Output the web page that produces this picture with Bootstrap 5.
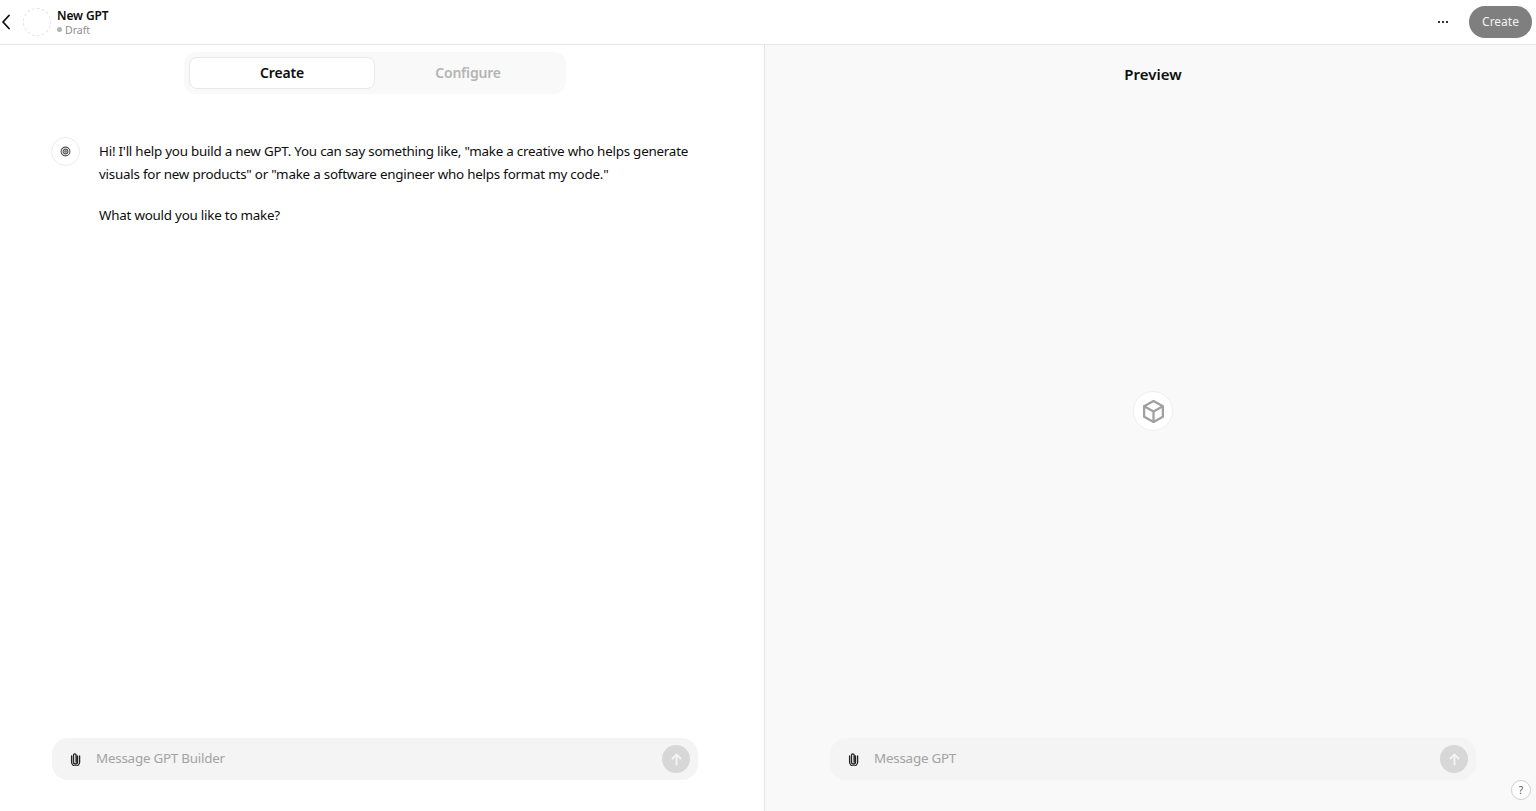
<!DOCTYPE html>
<html lang="en">
<head>
    <meta charset="UTF-8">
    <meta name="viewport" content="width=device-width, initial-scale=1.0">
    <title>New GPT</title>
    <link href="https://cdn.jsdelivr.net/npm/bootstrap@5.3.0/dist/css/bootstrap.min.css" rel="stylesheet">
    <style>
        html, body { height: 100%; }
        body {
            font-family: "Noto Sans", "Open Sans", sans-serif;
            font-size: 14px;
            color: #0d0d0d;
            overflow: hidden;
        }
        .top-bar { height: 45px; border-bottom: 1px solid #e5e5e5; padding-right: 4px; }
        .back-btn { width: 14px; margin-left: 1px; }
        .gpt-thumb { width: 28px; height: 28px; margin-left: 8px; margin-right: 6px; border: 1px dashed #e3e3e3; border-radius: 50%; }
        .gpt-name { font-size: 12px; font-weight: 600; line-height: 15px; letter-spacing: -.1px; }
        .gpt-state { font-size: 10.5px; line-height: 14px; color: #8e8e8e; }
        .state-dot { width: 5px; height: 5px; background: #b4b4b4; border-radius: 50%; margin-right: 3px; }
        .more-dots { width: 11px; height: 2px; margin-right: 21px; background-image: radial-gradient(circle, #333 1px, transparent 1.2px); background-size: 4px 2px; }
        .create-pill { background: #7f7f7f; color: #f2f2f2; font-size: 12px; height: 32px; width: 63px; border-radius: 16px; border: 0; padding: 0; }
        .main-area { height: 766px; }
        .builder-pane { width: 765px; border-right: 1px solid #e5e5e5; }
        .preview-pane { width: 771px; background: #f9f9f9; }
        .tab-strip { width: 382px; height: 42px; margin: 7px 0 0 184px; padding: 5px; background: #f9f9f9; border-radius: 12px; }
        .tab-item { width: 186px; height: 32px; font-size: 14px; font-weight: 600; letter-spacing: -.2px; border-radius: 8px; border: 1px solid transparent; background: none; padding: 0 0 2px; color: #b4b4b4; }
        .tab-item.is-on { background: #fff; border-color: #e8e8e8; color: #0d0d0d; }
        .chat-row { margin: 43px 0 0 51px; }
        .bot-avatar { width: 29px; height: 29px; margin-right: 19px; border: 1px solid #ececec; border-radius: 50%; }
        .chat-text { width: 600px; font-size: 13.4px; letter-spacing: -.23px; line-height: 23px; padding-top: 3px; }
        .chat-text p { margin-bottom: 18px; }
        .composer { width: 646px; height: 42px; background: #f4f4f4; border-radius: 16px; padding: 0 8px 0 18px; }
        .composer-wrap { padding-bottom: 31px; }
        .left-slot { padding-left: 52px; }
        .right-slot { padding-left: 65px; }
        .composer-hint { font-size: 13.4px; letter-spacing: -.23px; color: #a3a3a3; margin-left: 15px; padding-bottom: 2px; }
        .send-btn { width: 28px; height: 28px; background: #d7d7d7; border-radius: 50%; }
        .preview-title { padding: 19px 0 0 5px; font-size: 15px; font-weight: 600; line-height: 20px; }
        .cube-area { padding-left: 5px; }
        .cube-disc { width: 40px; height: 40px; background: #fff; border: 1px solid #efefef; border-radius: 50%; }
        .help-mark { position: absolute; right: 5px; bottom: 11px; width: 20px; height: 20px; border: 1px solid #d0d0d0; border-radius: 50%; font-size: 10px; color: #555; background: #fff; }
    </style>
</head>
<body>
    <header class="top-bar d-flex align-items-center">
        <span class="back-btn d-flex">
            <svg width="10" height="16" viewBox="0 0 10 16" fill="none" stroke="#0d0d0d" stroke-width="1.8" stroke-linecap="round" stroke-linejoin="round"><path d="M8 1.5 2 8l6 6.5"/></svg>
        </span>
        <span class="gpt-thumb"></span>
        <div>
            <div class="gpt-name">New GPT</div>
            <div class="gpt-state d-flex align-items-center"><span class="state-dot"></span>Draft</div>
        </div>
        <div class="ms-auto d-flex align-items-center">
            <span class="more-dots"></span>
            <button type="button" class="create-pill">Create</button>
        </div>
    </header>

    <main class="main-area d-flex">
        <section class="builder-pane d-flex flex-column">
            <div class="tab-strip d-flex">
                <button type="button" class="tab-item is-on">Create</button>
                <button type="button" class="tab-item">Configure</button>
            </div>
            <div class="chat-row d-flex flex-grow-1 align-items-start">
                <span class="bot-avatar d-flex align-items-center justify-content-center flex-shrink-0">
                    <svg width="11" height="11" viewBox="0 0 12 12" fill="none" stroke="#555" stroke-width="1.2"><circle cx="6" cy="6" r="4.8"/><circle cx="6" cy="6" r="2.6"/><circle cx="6" cy="6" r=".8"/></svg>
                </span>
                <div class="chat-text">
                    <p>Hi! I'll help you build a new GPT. You can say something like, "make a creative who helps generate visuals for new products" or "make a software engineer who helps format my code."</p>
                    <p>What would you like to make?</p>
                </div>
            </div>
            <div class="composer-wrap left-slot d-flex" id="leftComposer"></div>
        </section>

        <section class="preview-pane d-flex flex-column">
            <div class="preview-title text-center">Preview</div>
            <div class="cube-area flex-grow-1 d-flex align-items-center justify-content-center">
                <span class="cube-disc d-flex align-items-center justify-content-center">
                    <svg width="25" height="25" viewBox="0 0 24 24" fill="none" stroke="#a0a0a0" stroke-width="2.2" stroke-linejoin="round" stroke-linecap="round"><path d="M12 2 21 7v10l-9 5-9-5V7z"/><path d="M3 7l9 5 9-5M12 12v10"/></svg>
                </span>
            </div>
            <div class="composer-wrap right-slot d-flex" id="rightComposer"></div>
        </section>
    </main>

    <span class="help-mark d-flex align-items-center justify-content-center">?</span>

    <script>
        function composerHtml(hint) {
            return `
                <div class="composer d-flex align-items-center">
                    <svg width="11" height="14" viewBox="0 0 11 14" fill="none" stroke="#222" stroke-width="1.3" stroke-linecap="round"><path d="M7.5 4v6a2 2 0 0 1-4 0V3.2a1.3 1.3 0 0 1 2.6 0V10"/><path d="M9.6 4v6a4 4 0 0 1-8 0V4"/></svg>
                    <span class="composer-hint flex-grow-1">${hint}</span>
                    <span class="send-btn d-flex align-items-center justify-content-center">
                        <svg width="13" height="13" viewBox="0 0 13 13" fill="none" stroke="#f4f4f4" stroke-width="1.8" stroke-linecap="round" stroke-linejoin="round"><path d="M6.5 11.5v-10M2.5 5.5l4-4 4 4"/></svg>
                    </span>
                </div>`;
        }
        document.getElementById('leftComposer').innerHTML = composerHtml('Message GPT Builder');
        document.getElementById('rightComposer').innerHTML = composerHtml('Message GPT');
    </script>
    <script src="https://cdn.jsdelivr.net/npm/bootstrap@5.3.0/dist/js/bootstrap.bundle.min.js"></script>
</body>
</html>
